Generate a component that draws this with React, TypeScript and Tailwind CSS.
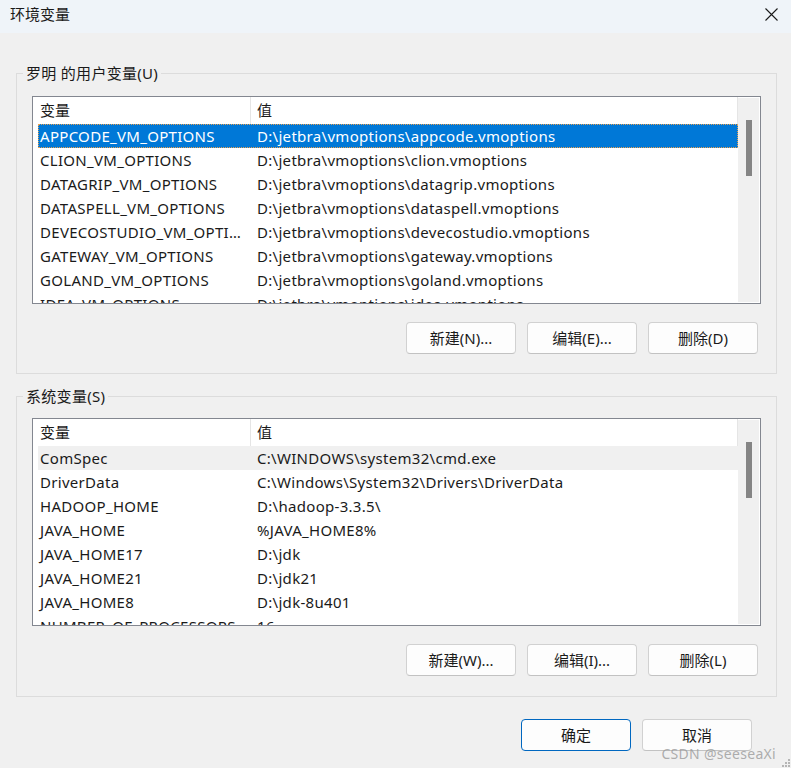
import React from 'react'

type Row = { name: string; value: string }

const userVars: Row[] = [
    { name: 'APPCODE_VM_OPTIONS', value: 'D:\\jetbra\\vmoptions\\appcode.vmoptions' },
    { name: 'CLION_VM_OPTIONS', value: 'D:\\jetbra\\vmoptions\\clion.vmoptions' },
    { name: 'DATAGRIP_VM_OPTIONS', value: 'D:\\jetbra\\vmoptions\\datagrip.vmoptions' },
    { name: 'DATASPELL_VM_OPTIONS', value: 'D:\\jetbra\\vmoptions\\dataspell.vmoptions' },
    { name: 'DEVECOSTUDIO_VM_OPTI…', value: 'D:\\jetbra\\vmoptions\\devecostudio.vmoptions' },
    { name: 'GATEWAY_VM_OPTIONS', value: 'D:\\jetbra\\vmoptions\\gateway.vmoptions' },
    { name: 'GOLAND_VM_OPTIONS', value: 'D:\\jetbra\\vmoptions\\goland.vmoptions' },
    { name: 'IDEA_VM_OPTIONS', value: 'D:\\jetbra\\vmoptions\\idea.vmoptions' },
]

const systemVars: Row[] = [
    { name: 'ComSpec', value: 'C:\\WINDOWS\\system32\\cmd.exe' },
    { name: 'DriverData', value: 'C:\\Windows\\System32\\Drivers\\DriverData' },
    { name: 'HADOOP_HOME', value: 'D:\\hadoop-3.3.5\\' },
    { name: 'JAVA_HOME', value: '%JAVA_HOME8%' },
    { name: 'JAVA_HOME17', value: 'D:\\jdk' },
    { name: 'JAVA_HOME21', value: 'D:\\jdk21' },
    { name: 'JAVA_HOME8', value: 'D:\\jdk-8u401' },
    { name: 'NUMBER_OF_PROCESSORS', value: '16' },
]

function Button({ label, primary }: { label: string; primary?: boolean }) {
    return (
        <button
            className={
                primary
                    ? 'w-[110px] h-[32px] rounded-[4px] border border-[#0067c0] bg-[#fdfdfd] text-[15px] text-[#1a1a1a]'
                    : 'w-[110px] h-[32px] rounded-[4px] border border-[#d1d1d1] border-b-[#c2c2c2] bg-[#fdfdfd] text-[15px] text-[#1a1a1a]'
            }
        >
            {label}
        </button>
    )
}

function VarList({ rows, mode }: { rows: Row[]; mode: 'selected' | 'hover' }) {
    return (
        <div className="flex h-[208px] border border-[#838790] bg-white overflow-hidden">
            <div className="flex-1 pl-[5px] overflow-hidden">
                <div className="flex h-[27px] items-center border-r border-[#e5e5e5]">
                    <div className="w-[213px] h-full pl-[2px] flex items-center border-r border-[#e5e5e5]">变量</div>
                    <div className="pl-[6px]">值</div>
                </div>
                {rows.map((r, i) => {
                    let cls = 'flex h-[24px] items-center whitespace-nowrap tracking-[0.3px]'
                    if (i === 0 && mode === 'selected') cls += ' bg-[#0078d7] text-white outline outline-1 outline-dotted outline-[#e8a050] -outline-offset-1'
                    if (i === 0 && mode === 'hover') cls += ' bg-[#f0f0f0]'
                    return (
                        <div key={r.name} className={cls}>
                            <div className="w-[213px] pl-[2px] overflow-hidden">{r.name}</div>
                            <div className="pl-[6px]">{r.value}</div>
                        </div>
                    )
                })}
            </div>
            <div className="w-[21px] my-[1px] mr-[1px] bg-[#f0f0f0] flex justify-center">
                <div className="w-[6px] h-[56px] mt-[22px] bg-[#858585]" />
            </div>
        </div>
    )
}

export default function App() {
    return (
        <div
            className="relative w-[791px] h-[768px] bg-[#f0f0f0] text-[15px] text-[#1a1a1a] flex flex-col overflow-hidden"
            style={{ fontFamily: '"Noto Sans", "Noto Sans CJK SC", sans-serif' }}
        >
            {/* title bar */}
            <div className="h-[33px] bg-[#eff4f9] flex items-center justify-between pl-[10px] pr-[13px]">
                <span className="leading-[20px] -mt-[6px]">环境变量</span>
                <svg width="13" height="13" viewBox="0 0 13 13" className="-mt-[4px]">
                    <path d="M0.5 0.5 L12.5 12.5 M12.5 0.5 L0.5 12.5" stroke="#1a1a1a" strokeWidth="1.1" />
                </svg>
            </div>

            <fieldset className="ml-[16px] w-[761px] mt-[30px] border border-[#dcdcdc] p-0">
                <legend className="ml-[6px] px-[3px] leading-[20px] tracking-[0.3px]">罗明 的用户变量(U)</legend>
                <div className="px-[15px] pt-[13px] pb-[19px]">
                    <VarList rows={userVars} mode="selected" />
                    <div className="flex justify-end gap-[11px] mt-[18px] pr-[3px]">
                        <Button label="新建(N)..." />
                        <Button label="编辑(E)..." />
                        <Button label="删除(D)" />
                    </div>
                </div>
            </fieldset>

            <fieldset className="ml-[16px] w-[761px] mt-[12px] border border-[#dcdcdc] p-0">
                <legend className="ml-[6px] px-[3px] leading-[20px] tracking-[0.3px]">系统变量(S)</legend>
                <div className="px-[15px] pt-[12px] pb-[20px]">
                    <VarList rows={systemVars} mode="hover" />
                    <div className="flex justify-end gap-[11px] mt-[18px] pr-[3px]">
                        <Button label="新建(W)..." />
                        <Button label="编辑(I)..." />
                        <Button label="删除(L)" />
                    </div>
                </div>
            </fieldset>

            <div className="flex justify-end gap-[11px] mt-[22px] pr-[39px]">
                <Button label="确定" primary />
                <Button label="取消" />
            </div>

            {/* watermark */}
            <div className="absolute right-[15px] bottom-[6px] text-[14px] leading-[16px] text-[#9a9a9a]/80 tracking-[0.3px]">
                CSDN @seeseaXi
            </div>
            <svg width="8" height="8" viewBox="0 0 8 8" className="absolute right-[1px] bottom-[1px]">
                <rect x="6" y="0" width="2" height="2" fill="#b5b5b5" />
                <rect x="3" y="3" width="2" height="2" fill="#b5b5b5" />
                <rect x="6" y="3" width="2" height="2" fill="#b5b5b5" />
                <rect x="0" y="6" width="2" height="2" fill="#b5b5b5" />
                <rect x="3" y="6" width="2" height="2" fill="#b5b5b5" />
                <rect x="6" y="6" width="2" height="2" fill="#b5b5b5" />
            </svg>
        </div>
    )
}
